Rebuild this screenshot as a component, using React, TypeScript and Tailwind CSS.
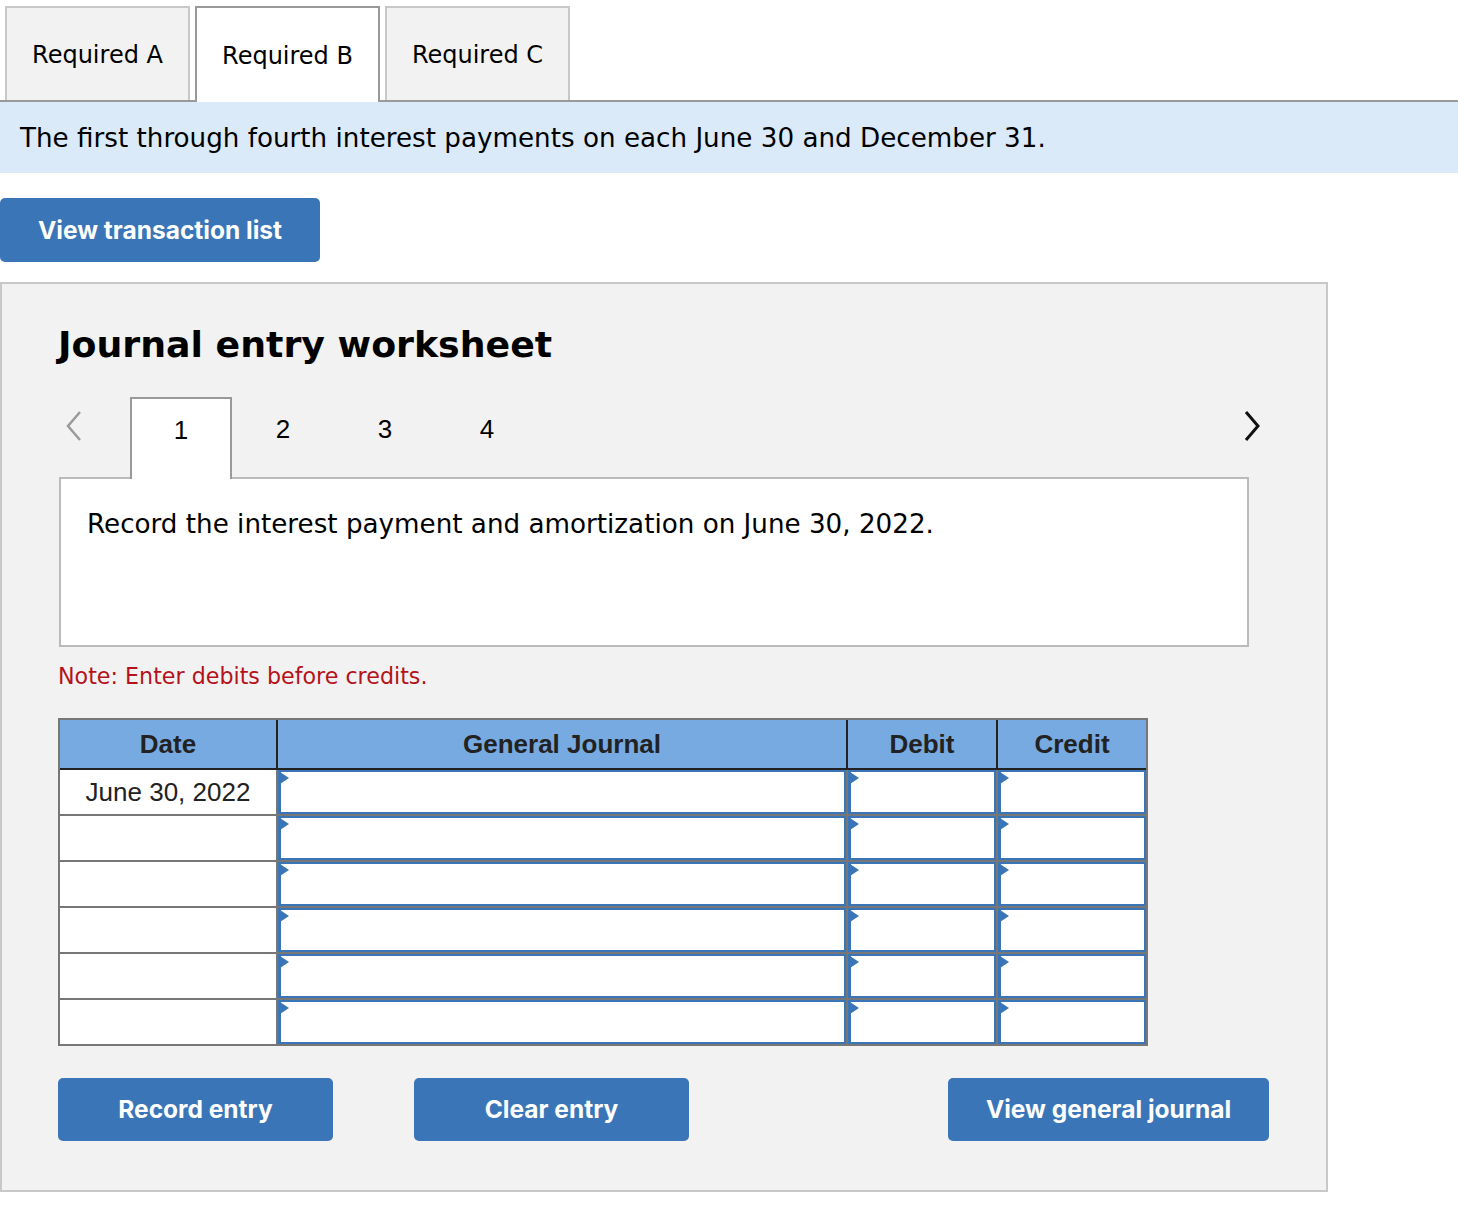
import { useState } from "react";

const requiredTabs = ["Required A", "Required B", "Required C"];
const entryTabs = [1, 2, 3, 4];
const blankRows = [1, 2, 3, 4, 5];

function InputCell({ width }: { width: string }) {
  return (
    <div className={`${width} border-l-2 border-[#777] bg-white`}>
      <div className="relative h-full w-full border-2 border-l-[3px] border-[#3a76b7] bg-white">
        <span className="absolute left-[-1px] top-0 h-0 w-0 border-y-[6px] border-l-[9px] border-y-transparent border-l-[#3a76b7]" />
      </div>
    </div>
  );
}

function JournalRow({ date }: { date?: string }) {
  return (
    <div className="flex h-[46px] border-t-2 border-[#777]">
      <div className="flex w-[216px] items-center justify-center bg-white text-[26px] text-[#222]">
        {date}
      </div>
      <InputCell width="w-[570px]" />
      <InputCell width="w-[150px]" />
      <InputCell width="w-[150px]" />
    </div>
  );
}

function BlueButton({ label, className }: { label: string; className: string }) {
  return (
    <button
      className={`${className} rounded-[5px] bg-[#3a76b7] font-['Inter',sans-serif] text-[24.5px] font-bold text-white`}
    >
      {label}
    </button>
  );
}

export default function App() {
  const [activeRequired, setActiveRequired] = useState(1);
  const [activeEntry, setActiveEntry] = useState(1);

  return (
    <div className="min-h-[1206px] w-[1458px] bg-white font-['DejaVu_Sans',sans-serif] text-black">
      {/* Required tabs */}
      <div className="flex items-end gap-[5px] border-b-2 border-[#9a9a9a] pl-[5px] pt-[6px]">
        {requiredTabs.map((tab, i) =>
          i === activeRequired ? (
            <button
              key={tab}
              onClick={() => setActiveRequired(i)}
              className="relative z-10 mb-[-2px] h-[96px] w-[185px] border-2 border-b-0 border-[#999] bg-white pt-[2px] text-[24px]"
            >
              {tab}
            </button>
          ) : (
            <button
              key={tab}
              onClick={() => setActiveRequired(i)}
              className="h-[94px] w-[185px] border-2 border-b-0 border-[#c8c8c8] bg-[#f2f2f2] pt-[2px] text-[24px]"
            >
              {tab}
            </button>
          )
        )}
      </div>

      <div className="flex h-[71px] items-center bg-[#dbeaf8] pl-[20px] pt-[3px] text-[26.2px]">
        The first through fourth interest payments on each June 30 and December 31.
      </div>

      <BlueButton label="View transaction list" className="mt-[25px] h-[64px] w-[320px]" />

      {/* Worksheet panel */}
      <div className="mt-[20px] h-[910px] w-[1328px] border-2 border-[#c8c8c8] bg-[#f2f2f2] pl-[56px] pt-[39px]">
        <h1 className="text-[36.3px] font-bold leading-[44px]">Journal entry worksheet</h1>

        <div className="mt-[30px] flex h-[80px] w-[1210px] items-stretch">
          <div className="flex w-[72px] items-start pl-[6px] pt-[13px]">
            <svg width="20" height="32" viewBox="0 0 20 32" fill="none">
              <polyline points="16,2 4,16 16,30" stroke="#9a9a9a" strokeWidth="2.5" />
            </svg>
          </div>
          {entryTabs.map((n) =>
            n === activeEntry ? (
              <button
                key={n}
                onClick={() => setActiveEntry(n)}
                className="relative z-10 mb-[-2px] w-[102px] border-2 border-b-0 border-[#999] bg-white pb-[18px] font-['Liberation_Sans',sans-serif] text-[26px]"
              >
                {n}
              </button>
            ) : (
              <button
                key={n}
                onClick={() => setActiveEntry(n)}
                className="w-[102px] pb-[16px] font-['Liberation_Sans',sans-serif] text-[26px]"
              >
                {n}
              </button>
            )
          )}
          <div className="ml-auto flex w-[32px] items-start justify-center pt-[13px]">
            <svg width="20" height="32" viewBox="0 0 20 32" fill="none">
              <polyline points="4,2 16,16 4,30" stroke="#111" strokeWidth="3" />
            </svg>
          </div>
        </div>

        <div className="ml-[1px] h-[170px] w-[1190px] border-2 border-[#bbb] bg-white pl-[26px] pt-[26px] text-[26.2px]">
          Record the interest payment and amortization on June 30, 2022.
        </div>

        <p className="mt-[15px] text-[22.2px] leading-[28px] text-[#b5121b]">
          Note: Enter debits before credits.
        </p>

        {/* Journal table */}
        <div className="mt-[28px] w-[1090px] border-2 border-[#777] font-['Liberation_Sans',sans-serif]">
          <div className="flex h-[48px] bg-[#77aae0] text-[26px] font-bold text-[#222]">
            <div className="flex w-[216px] items-center justify-center">Date</div>
            <div className="flex w-[570px] items-center justify-center border-l-2 border-[#222]">
              General Journal
            </div>
            <div className="flex w-[150px] items-center justify-center border-l-2 border-[#222]">Debit</div>
            <div className="flex w-[150px] items-center justify-center border-l-2 border-[#222]">Credit</div>
          </div>
          <div className="[&>div:first-child]:border-t-[#222]">
            <JournalRow date="June 30, 2022" />
            {blankRows.map((r) => (
              <JournalRow key={r} />
            ))}
          </div>
        </div>

        <div className="mt-[32px] flex w-[1211px] gap-[81px]">
          <BlueButton label="Record entry" className="h-[63px] w-[275px]" />
          <BlueButton label="Clear entry" className="h-[63px] w-[275px]" />
          <BlueButton label="View general journal" className="ml-auto h-[63px] w-[321px]" />
        </div>
      </div>
    </div>
  );
}
